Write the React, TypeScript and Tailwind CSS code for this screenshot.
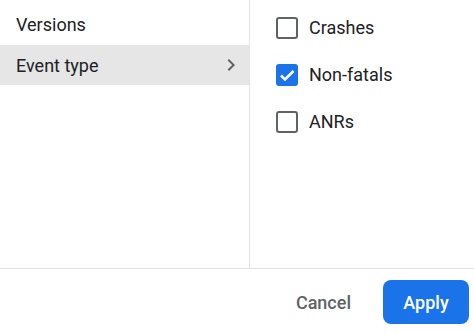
import { useState } from "react";

type EventKey = "crashes" | "nonfatals" | "anrs";

const EVENT_TYPES: { key: EventKey; label: string }[] = [
  { key: "crashes", label: "Crashes" },
  { key: "nonfatals", label: "Non-fatals" },
  { key: "anrs", label: "ANRs" },
];

function ChevronRight() {
  return (
    <svg viewBox="0 0 24 24" className="h-6 w-6 text-[#5f6368]" aria-hidden="true">
      <path fill="currentColor" d="M10 6 8.59 7.41 13.17 12l-4.58 4.59L10 18l6-6z" />
    </svg>
  );
}

function Checkbox({ checked }: { checked: boolean }) {
  if (checked) {
    return (
      <span className="flex h-[22px] w-[22px] shrink-0 items-center justify-center rounded-[3px] bg-[#1a73e8]">
        <svg viewBox="0 0 22 22" className="h-[22px] w-[22px]" aria-hidden="true">
          <polyline
            points="5,11.5 9,15.5 17.5,7"
            fill="none"
            stroke="white"
            strokeWidth="2.6"
          />
        </svg>
      </span>
    );
  }
  return (
    <span className="h-[22px] w-[22px] shrink-0 rounded-[3px] border-2 border-[#5f6368] bg-white" />
  );
}

export default function App() {
  const [selected, setSelected] = useState<Record<EventKey, boolean>>({
    crashes: false,
    nonfatals: true,
    anrs: false,
  });

  return (
    <div className="flex h-[332px] w-[474px] flex-col bg-white font-['Roboto','Liberation_Sans',sans-serif] text-[#202124]">
      <div className="flex h-[268px]">
        {/* filter categories */}
        <div className="w-[250px] shrink-0 border-r border-[#e3e3e3] pt-[4px]">
          <div className="flex h-[41px] items-center px-4 text-[18px]">Versions</div>
          <div className="flex h-[40px] items-center justify-between bg-[#e6e6e6] pl-4 pr-[6px] text-[18px]">
            <span>Event type</span>
            <ChevronRight />
          </div>
        </div>

        {/* options */}
        <div className="flex-1 pl-[26px] pt-[4px]">
          {EVENT_TYPES.map((t) => (
            <label
              key={t.key}
              className="flex h-[47px] cursor-pointer items-center gap-[11px] text-[18px]"
              onClick={() => setSelected((s) => ({ ...s, [t.key]: !s[t.key] }))}
            >
              <Checkbox checked={selected[t.key]} />
              <span>{t.label}</span>
            </label>
          ))}
        </div>
      </div>

      <div className="flex h-[64px] items-start justify-end border-t border-[#e3e3e3] pr-[5px] pt-[11px]">
        <button className="h-[44px] px-4 text-[18px] font-medium text-[#5f6368]">Cancel</button>
        <button className="ml-4 h-[44px] w-[86px] rounded-[8px] bg-[#1a73e8] text-[18px] font-medium text-white">
          Apply
        </button>
      </div>
    </div>
  );
}
